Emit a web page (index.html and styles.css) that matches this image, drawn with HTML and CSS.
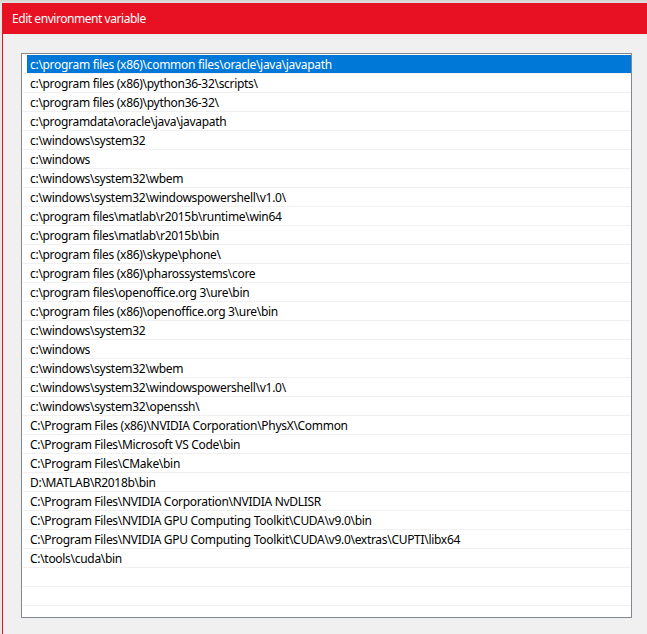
FILE: index.html
```html
<!DOCTYPE html>
<html>
<head>
<meta charset="utf-8">
<link rel="stylesheet" href="styles.css">
</head>
<body>
<div class="screen">
  <div class="topstrip"></div>
  <div class="main">
    <div class="bgapp"></div>
    <div class="dialog">
      <div class="titlebar">Edit environment variable</div>
      <div class="content">
        <div class="listbox">
          <div class="row selected"><div class="cell">c:\program files (x86)\common files\oracle\java\javapath</div></div>
          <div class="row"><div class="cell">c:\program files (x86)\python36-32\scripts\</div></div>
          <div class="row"><div class="cell">c:\program files (x86)\python36-32\</div></div>
          <div class="row"><div class="cell">c:\programdata\oracle\java\javapath</div></div>
          <div class="row"><div class="cell">c:\windows\system32</div></div>
          <div class="row"><div class="cell">c:\windows</div></div>
          <div class="row"><div class="cell">c:\windows\system32\wbem</div></div>
          <div class="row"><div class="cell">c:\windows\system32\windowspowershell\v1.0\</div></div>
          <div class="row"><div class="cell">c:\program files\matlab\r2015b\runtime\win64</div></div>
          <div class="row"><div class="cell">c:\program files\matlab\r2015b\bin</div></div>
          <div class="row"><div class="cell">c:\program files (x86)\skype\phone\</div></div>
          <div class="row"><div class="cell">c:\program files (x86)\pharossystems\core</div></div>
          <div class="row"><div class="cell">c:\program files\openoffice.org 3\ure\bin</div></div>
          <div class="row"><div class="cell">c:\program files (x86)\openoffice.org 3\ure\bin</div></div>
          <div class="row"><div class="cell">c:\windows\system32</div></div>
          <div class="row"><div class="cell">c:\windows</div></div>
          <div class="row"><div class="cell">c:\windows\system32\wbem</div></div>
          <div class="row"><div class="cell">c:\windows\system32\windowspowershell\v1.0\</div></div>
          <div class="row"><div class="cell">c:\windows\system32\openssh\</div></div>
          <div class="row"><div class="cell">C:\Program Files (x86)\NVIDIA Corporation\PhysX\Common</div></div>
          <div class="row"><div class="cell">C:\Program Files\Microsoft VS Code\bin</div></div>
          <div class="row"><div class="cell">C:\Program Files\CMake\bin</div></div>
          <div class="row"><div class="cell">D:\MATLAB\R2018b\bin</div></div>
          <div class="row"><div class="cell">C:\Program Files\NVIDIA Corporation\NVIDIA NvDLISR</div></div>
          <div class="row"><div class="cell">C:\Program Files\NVIDIA GPU Computing Toolkit\CUDA\v9.0\bin</div></div>
          <div class="row"><div class="cell">C:\Program Files\NVIDIA GPU Computing Toolkit\CUDA\v9.0\extras\CUPTI\libx64</div></div>
          <div class="row"><div class="cell">C:\tools\cuda\bin</div></div>
          <div class="row"><div class="cell"></div></div>
          <div class="row"><div class="cell"></div></div>
          <div class="row"><div class="cell"></div></div>
        </div>
      </div>
    </div>
  </div>
</div>
</body>
</html>
```

FILE: styles.css
```css
html, body {
  margin: 0;
  padding: 0;
  background: #f0f0f0;
}
.screen {
  width: 647px;
  height: 634px;
  display: flex;
  flex-direction: column;
  overflow: hidden;
  font-family: "Noto Sans", "Liberation Sans", sans-serif;
  font-size: 12px;
}
.topstrip {
  height: 3px;
  background: linear-gradient(to bottom, #d4d4d4, #e2e2e2);
  flex: none;
}
.main {
  flex: 1;
  display: flex;
  min-height: 0;
}
.bgapp {
  width: 2px;
  flex: none;
  background: #e6e6e6;
}
.dialog {
  flex: 1;
  display: flex;
  flex-direction: column;
  border-left: 1px solid #e81123;
  background: #f0f0f0;
  min-width: 0;
}
.titlebar {
  height: 31px;
  flex: none;
  background: #e81123;
  color: #ffffff;
  line-height: 31px;
  padding-left: 9px;
  box-sizing: border-box;
  letter-spacing: -0.45px;
}
.content {
  flex: 1;
  padding: 19px 0 0 18px;
  min-height: 0;
}
.listbox {
  width: 611px;
  height: 565px;
  box-sizing: border-box;
  border: 1px solid #828790;
  background: #ffffff;
  padding: 1px 0 0 1px;
  overflow: hidden;
}
.row {
  height: 19px;
  box-sizing: border-box;
  border-bottom: 1px solid #f0f0f0;
  padding-left: 4px;
}
.cell {
  height: 18px;
  box-sizing: border-box;
  padding-top: 1px;
  line-height: 18px;
  padding-left: 3px;
  color: #000000;
  white-space: nowrap;
  letter-spacing: -0.3px;
}
.row.selected .cell {
  background: #0078d7;
  color: #ffffff;
}
```
